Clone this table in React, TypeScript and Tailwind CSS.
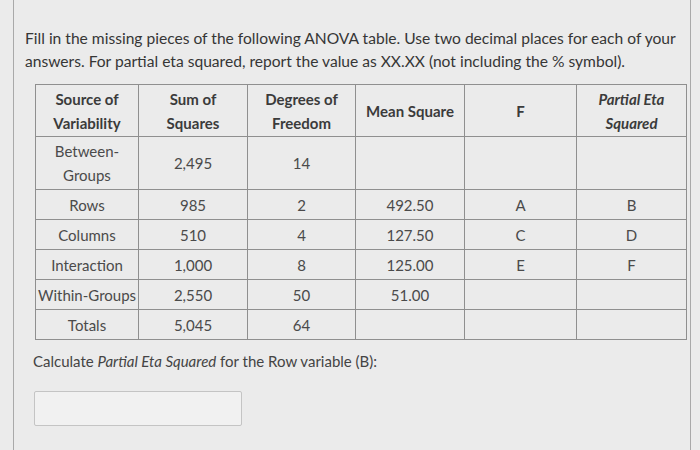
const rows = [
  { src: 'Rows', ss: '985', df: '2', ms: '492.50', f: 'A', eta: 'B' },
  { src: 'Columns', ss: '510', df: '4', ms: '127.50', f: 'C', eta: 'D' },
  { src: 'Interaction', ss: '1,000', df: '8', ms: '125.00', f: 'E', eta: 'F' },
  { src: 'Within-Groups', ss: '2,550', df: '50', ms: '51.00', f: '', eta: '' },
  { src: 'Totals', ss: '5,045', df: '64', ms: '', f: '', eta: '' },
]

function App() {
  const cell = 'border border-[#8f8f8f] text-center p-0'
  return (
    <div className="w-[700px] h-[450px] overflow-hidden bg-[#ebebeb] font-['Lato',sans-serif] text-[#363636]">
      <div className="ml-[13px] w-[678px] h-full border-l border-r border-[#a9a9a9] pl-[11px] pt-[27px]">
        <p className="text-[15.6px] leading-[23px]">
          Fill in the missing pieces of the following ANOVA table. Use two decimal places for each of your answers. For partial eta squared, report the value as XX.XX (not including the % symbol).
        </p>

        <table className="mt-[11px] ml-[10px] border-collapse table-fixed w-[651px] text-[15px] leading-6 text-[#4a4a4a]">
          <colgroup>
            <col className="w-[103px]" />
            <col className="w-[109px]" />
            <col className="w-[108px]" />
            <col className="w-[109px]" />
            <col className="w-[112px]" />
            <col className="w-[110px]" />
          </colgroup>
          <thead>
            <tr className="h-[52px] font-semibold text-[#3b3b3b]">
              <th className={cell}>Source of<br />Variability</th>
              <th className={cell}>Sum of<br />Squares</th>
              <th className={cell}>Degrees of<br />Freedom</th>
              <th className={cell}>Mean Square</th>
              <th className={cell}>F</th>
              <th className={`${cell} italic`}>Partial Eta<br />Squared</th>
            </tr>
          </thead>
          <tbody>
            <tr className="h-[53px]">
              <td className={cell}>Between-<br />Groups</td>
              <td className={cell}>2,495</td>
              <td className={cell}>14</td>
              <td className={cell}></td>
              <td className={cell}></td>
              <td className={cell}></td>
            </tr>
            {rows.map((r) => (
              <tr key={r.src} className="h-[30px]">
                <td className={`${cell} whitespace-nowrap`}>{r.src}</td>
                <td className={cell}>{r.ss}</td>
                <td className={cell}>{r.df}</td>
                <td className={cell}>{r.ms}</td>
                <td className={cell}>{r.f}</td>
                <td className={cell}>{r.eta}</td>
              </tr>
            ))}
          </tbody>
        </table>

        <p className="mt-[9px] ml-[8px] text-[15px] leading-6 text-[#444]">
          Calculate <span className="italic">Partial Eta Squared</span> for the Row variable (B):
        </p>

        <div className="mt-[18px] ml-[9px] w-[208px] h-[35px] border border-[#c4c4c4] bg-[#f1f1f1] rounded-[2px]"></div>
      </div>
    </div>
  )
}

export default App
